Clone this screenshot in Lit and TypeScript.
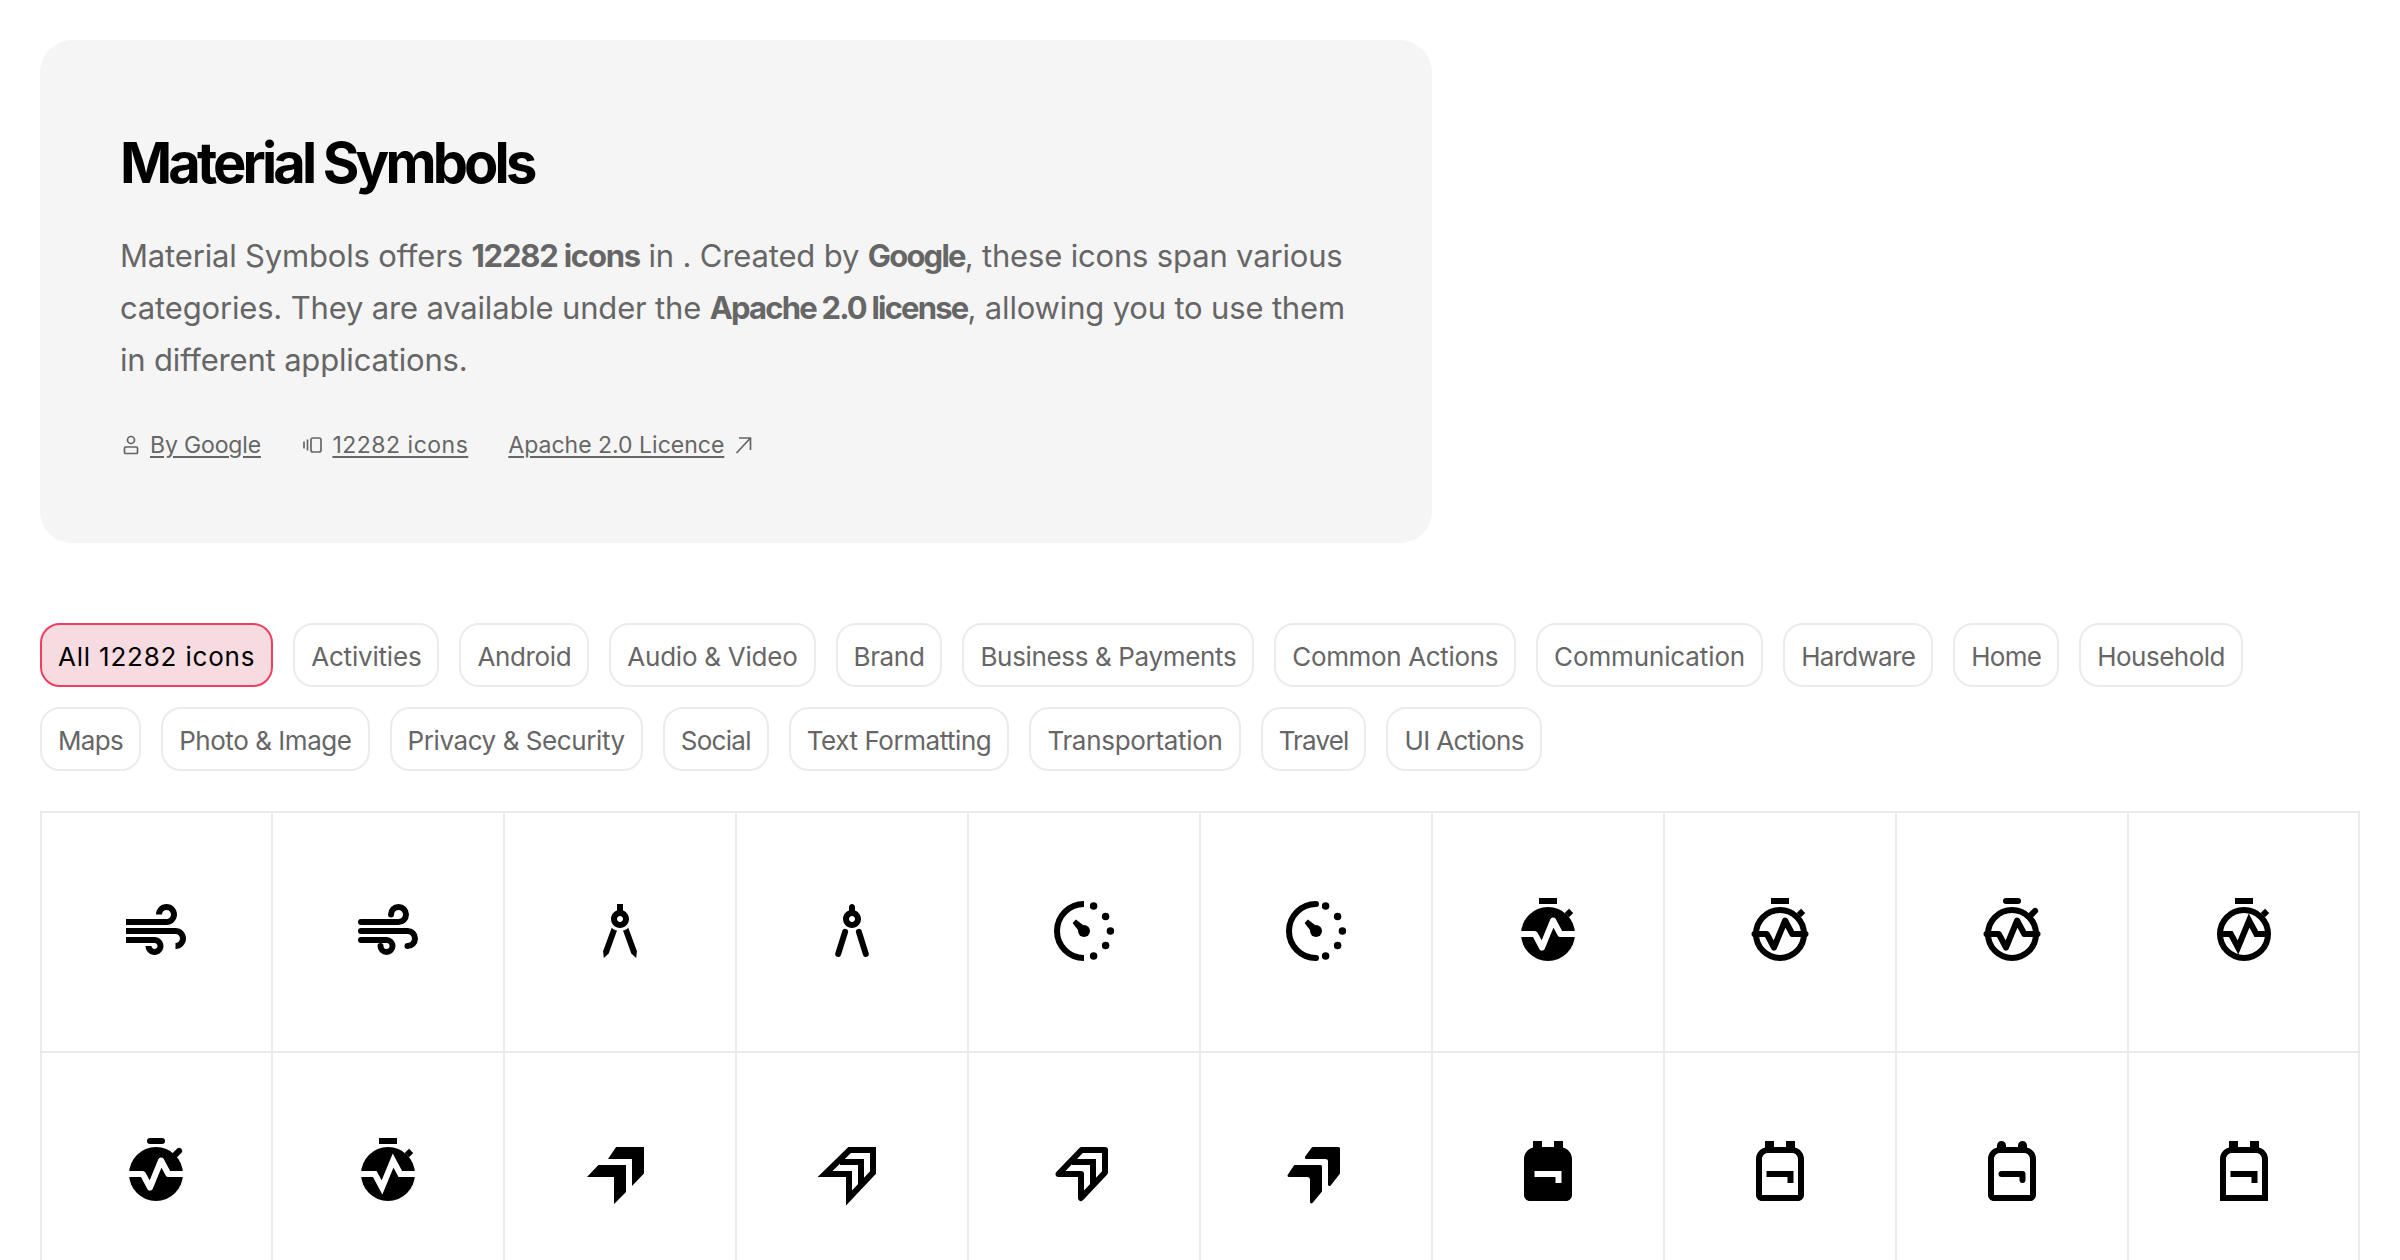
import { LitElement, html, css, svg } from "lit";
import { customElement } from "lit/decorators.js";

const airSharp = svg`<path d="M14.5 17c0 1.65-1.35 3-3 3s-3-1.35-3-3h2c0 .55.45 1 1 1s1-.45 1-1-.45-1-1-1H2v-2h9.5c1.65 0 3 1.35 3 3zM19 6.5C19 4.57 17.43 3 15.5 3S12 4.57 12 6.5h2c0-.83.67-1.5 1.5-1.5s1.5.67 1.5 1.5S16.33 8 15.5 8H2v2h13.5c1.93 0 3.5-1.57 3.5-3.5zm-.5 4.5H2v2h16.5c.83 0 1.5.67 1.5 1.5s-.67 1.5-1.5 1.5v2c1.93 0 3.5-1.57 3.5-3.5S20.43 11 18.5 11z"/>`;
const airRound = svg`<path class="ln rnd" d="M3 9h12.5A2.5 2.5 0 1 0 13 6.5M3 12h15.5a2.5 2.5 0 0 1 0 5M3 15h8.5a2 2 0 1 1-2 2"/>`;
const compass = svg`<path d="M6.36 18.78 6.61 21l1.62-1.54 2.77-7.6c-.68-.17-1.28-.51-1.77-.98l-2.87 7.9zm8.41-7.9c-.49.47-1.1.81-1.77.98l2.77 7.6L17.39 21l.25-2.22-2.87-7.9zM15 8c0-1.3-.84-2.4-2-2.82V3h-2v2.18C9.84 5.6 9 6.7 9 8c0 1.66 1.34 3 3 3s3-1.34 3-3zm-3 1c-.55 0-1-.45-1-1s.45-1 1-1 1 .45 1 1-.45 1-1 1z"/>`;
const compassRound = svg`<path d="M15 8c0-1.3-.84-2.4-2-2.82V4c0-.55-.45-1-1-1s-1 .45-1 1v1.18C9.84 5.6 9 6.7 9 8c0 1.66 1.34 3 3 3s3-1.34 3-3zm-3 1c-.55 0-1-.45-1-1s.45-1 1-1 1 .45 1 1-.45 1-1 1z"/><path class="ln rnd" d="M9.7 12.3 7.4 19.6M14.3 12.3 16.6 19.6"/>`;
const dots = svg`<circle cx="15.2" cy="3.7" r="1.25"/><circle cx="19.2" cy="7.2" r="1.25"/><circle cx="20.8" cy="12" r="1.25"/><circle cx="19.2" cy="16.8" r="1.25"/><circle cx="15.2" cy="20.3" r="1.25"/><circle cx="12" cy="12" r="2"/><path d="M8.2 9.3 9.3 8.2 13 11 11 13z"/>`;
const timerSharp = svg`<path class="ln" d="M12 3a9 9 0 0 0 0 18"/>${dots}`;
const timerRound = svg`<path class="ln rnd" d="M12 3a9 9 0 0 0 0 18"/>${dots}`;

const PULSE = "M2 13H7.6L10 17.5 13.7 8.5 16.1 13H22";
const swFill = (round: boolean, soft: boolean) => svg`
  ${round ? svg`<rect x="9" y="1" width="6" height="2" rx="1"/>` : svg`<rect x="9" y="1" width="6" height="2"/>`}
  <circle cx="12" cy="13" r="9"/>
  <path class="ln ${round ? "rnd" : ""}" d="M18.3 6.7 19.7 5.3"/>
  <path class="wh ${soft ? "rj" : ""}" d="${PULSE}"/>`;
const swLine = (round: boolean, pointy: boolean) => svg`
  ${round ? svg`<rect x="9" y="1" width="6" height="2" rx="1"/>` : svg`<rect x="9" y="1" width="6" height="2"/>`}
  <circle class="ln" cx="12" cy="13" r="8"/>
  <path class="ln ${round ? "rnd" : ""}" d="M18.3 6.7 19.7 5.3"/>
  <path class="ln ${pointy ? "" : "rj"}" d="M3.5 13H7.6L10 17.5 13.7 8.5 16.1 13H20.5"/>`;

const arrowFill = svg`<path d="M10.7 4H20V12.8L16 17V8H8ZM4.8 10H14V19L10 23V14H1Z"/>`;
const arrowFillRound = svg`<path class="rf" d="M11 4.5H19.5V12.7L16.5 16.5V8.8Q16.5 7.5 15 7.5H8.8ZM5 10.5H13.5V18.7L10.5 22.3V15Q10.5 13.5 9 13.5H3Z"/>`;
const arrowLine = svg`<path class="ln" d="M11.2 5H19V12.5L11 21V13H3Z"/><path class="ln" d="M8 9H15V17"/>`;
const arrowLineRound = svg`<path class="ln rnd" d="M11.2 5H19V12.5L11 21V13H3.5Z"/><path class="ln" d="M8 9H15V17"/>`;

const hook = "M7.5 12H16.5V16H14.5V14H7.5Z";
const hookRound = "M8.5 12H15.5Q16.5 12 16.5 13V15a1 1 0 0 1-2 0V14H8.5a1 1 0 0 1 0-2Z";
const packFill = svg`<path fill-rule="evenodd" d="M20 8v12c0 1.1-.9 2-2 2H6c-1.1 0-2-.9-2-2V8c0-1.86 1.28-3.41 3-3.86V2h3v2h4V2h3v2.14c1.72.45 3 2 3 3.86z${hook}"/>`;
const inner = "M6 20V8c0-1.1.9-2 2-2h8c1.1 0 2 .9 2 2v12z";
const packLine = svg`<path fill-rule="evenodd" d="M20 8v12c0 1.1-.9 2-2 2H6c-1.1 0-2-.9-2-2V8c0-1.86 1.28-3.41 3-3.86V2h3v2h4V2h3v2.14c1.72.45 3 2 3 3.86z${inner}"/><path d="${hook}"/>`;
const packLineRound = svg`<path fill-rule="evenodd" d="M20 8v12c0 1.1-.9 2-2 2H6c-1.1 0-2-.9-2-2V8c0-1.86 1.28-3.41 3-3.86V3.5a1.5 1.5 0 0 1 3 0V4h4v-.5a1.5 1.5 0 0 1 3 0v.64c1.72.45 3 2 3 3.86z${inner}"/><path d="${hookRound}"/>`;
const packLineSharp = svg`<path fill-rule="evenodd" d="M20 8v14H4V8c0-1.86 1.28-3.41 3-3.86V2h3v2h4V2h3v2.14c1.72.45 3 2 3 3.86z${inner}"/><path d="${hook}"/>`;

const ICONS = [
  airSharp, airRound, compass, compassRound, timerSharp, timerRound,
  swFill(false, true), swLine(false, false), swLine(true, false), swLine(false, true),
  swFill(true, true), swFill(false, false), arrowFill, arrowLine, arrowLineRound, arrowFillRound,
  packFill, packLine, packLineRound, packLineSharp,
];

const TAGS = [
  "Activities", "Android", "Audio & Video", "Brand", "Business & Payments", "Common Actions",
  "Communication", "Hardware", "Home", "Household", "Maps", "Photo & Image",
  "Privacy & Security", "Social", "Text Formatting", "Transportation", "Travel", "UI Actions",
];
const TAG_SPACING: Record<string, number> = {
  Activities: -0.2,
  "Audio & Video": -0.25,
  Communication: -0.12,
  Hardware: -0.7,
  Home: -0.7,
  Household: -0.5,
  Maps: -0.65,
  "Photo & Image": -0.45,
  "Privacy & Security": -0.42,
  Social: -0.7,
  "Text Formatting": -0.45,
  Transportation: -0.3,
  Travel: -0.85,
  "UI Actions": -0.65,
};

@customElement("app-root")
export class AppRoot extends LitElement {
  static styles = css`
    :host {
      display: block;
      height: 1260px;
      overflow: hidden;
      background: #fff;
      font-family: "Inter", "Noto Sans", sans-serif;
      color: #666;
    }
    .page { padding: 40px 40px 0; }
    .card {
      width: 1392px;
      box-sizing: border-box;
      padding: 80px;
      background: #f5f5f5;
      border-radius: 32px;
    }
    h1 {
      margin: 0;
      font-size: 56px;
      line-height: 86px;
      font-weight: 700;
      letter-spacing: -3.85px;
      color: #000;
    }
    p {
      margin: 24px 0 0;
      font-size: 31px;
      line-height: 52px;
      letter-spacing: -0.17px;
      color: #666;
    }
    p b { font-weight: 700; letter-spacing: -1.8px; }
    p b.first { letter-spacing: -1.2px; }
    .meta {
      display: flex;
      align-items: center;
      gap: 40px;
      margin-top: 41px;
      height: 36px;
      font-size: 23px;
      letter-spacing: -0.15px;
    }
    .meta span { display: flex; align-items: center; gap: 8px; }
    .meta span:first-child { margin-right: 1.5px; }
    .meta u { text-underline-offset: 3px; text-decoration-thickness: 1.5px; }
    .meta .wide { letter-spacing: 0.5px; }
    .meta .lic { letter-spacing: 0; }
    .meta svg { width: 22px; height: 22px; fill: none; stroke: #666; stroke-width: 1.7; flex: none; }
    .tags {
      display: flex;
      flex-wrap: wrap;
      gap: 20px;
      margin-top: 80px;
    }
    .tag {
      box-sizing: border-box;
      height: 64px;
      padding: 2px 16px 0;
      display: flex;
      align-items: center;
      border: 2px solid #ebebeb;
      border-radius: 20px;
      font-size: 26px;
      letter-spacing: -0.35px;
      color: #666;
      white-space: nowrap;
    }
    .tag.on {
      background: #f6dce1;
      border-color: #ef3e62;
      color: #000;
      letter-spacing: 0.8px;
    }
    .grid {
      display: grid;
      grid-template-columns: 231px repeat(8, 232px) 231px;
      margin-top: 40px;
      border-left: 2px solid #ebebeb;
    }
    .cell {
      box-sizing: border-box;
      height: 240px;
      padding-bottom: 2px;
      display: flex;
      align-items: center;
      justify-content: center;
      border-right: 2px solid #ebebeb;
      border-top: 2px solid #ebebeb;
    }
    .cell:nth-child(10n + 1) { padding-right: 1px; }
    .cell:nth-child(10n) { padding-left: 1px; }
    .cell svg { width: 72px; height: 72px; fill: #000; }
    .ln { fill: none; stroke: #000; stroke-width: 2; }
    .rnd { stroke-linecap: round; stroke-linejoin: round; }
    .rj { stroke-linejoin: round; stroke-linecap: round; }
    .wh { fill: none; stroke: #fff; stroke-width: 2; }
    .rf { stroke: #000; stroke-width: 1; stroke-linejoin: round; }
  `;

  render() {
    return html`<div class="page">
      <section class="card">
        <h1>Material Symbols</h1>
        <p>Material Symbols offers <b class="first">12282 icons</b> in . Created by <b>Google</b>, these icons span various categories. They are available under the <b>Apache 2.0 license</b>, allowing you to use them in different applications.</p>
        <div class="meta">
          <span>
            <svg viewBox="0 0 22 22"><circle cx="11" cy="6" r="3.5"/><rect x="4.5" y="13" width="13" height="6.5" rx="1"/></svg>
            <u>By Google</u>
          </span>
          <span>
            <svg viewBox="0 0 22 22"><rect x="9" y="4" width="10" height="14" rx="2"/><path d="M5.5 5.5V16.5M2 7.5V14.5"/></svg>
            <u class="wide">12282 icons</u>
          </span>
          <span>
            <u class="lic">Apache 2.0 Licence</u>
            <svg viewBox="0 0 22 22"><path d="M4.5 19 18.5 4M7 4H18.5V16"/></svg>
          </span>
        </div>
      </section>
      <div class="tags">
        <div class="tag on">All 12282 icons</div>
        ${TAGS.map((t) => {
          const ls = TAG_SPACING[t];
          return html`<div class="tag" style=${ls === undefined ? "" : `letter-spacing:${ls}px`}>${t}</div>`;
        })}
      </div>
      <div class="grid">
        ${ICONS.map((i) => html`<div class="cell"><svg viewBox="0 0 24 24">${i}</svg></div>`)}
      </div>
    </div>`;
  }
}
